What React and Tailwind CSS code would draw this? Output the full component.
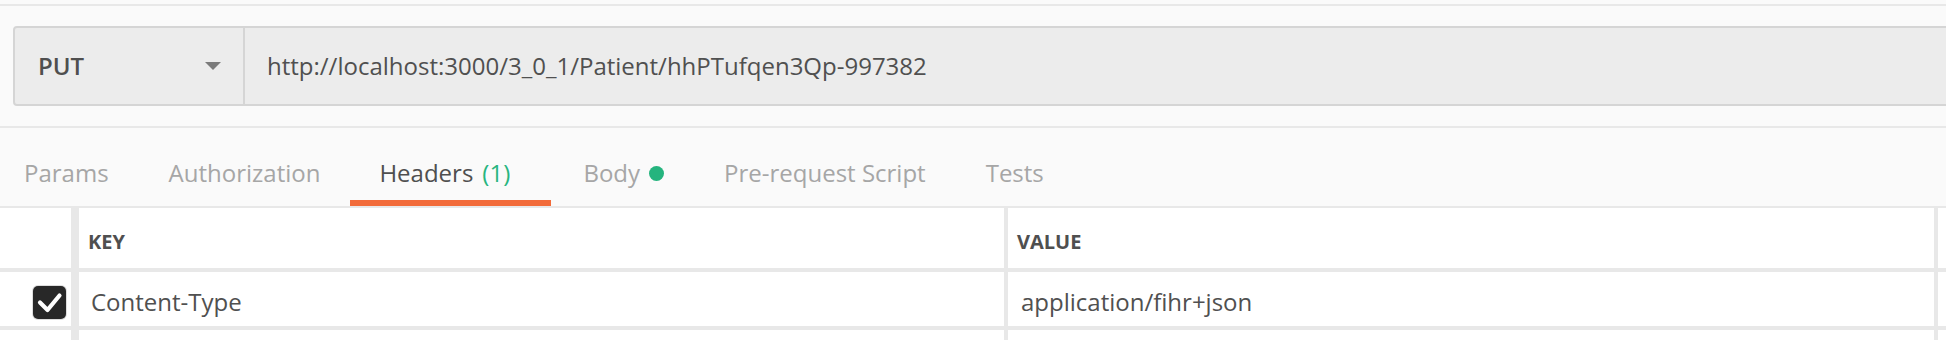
import React from 'react';

const tabs = [
  { id: 'params', label: 'Params' },
  { id: 'auth', label: 'Authorization' },
  { id: 'headers', label: 'Headers', count: 1, active: true },
  { id: 'body', label: 'Body', dot: true },
  { id: 'pre', label: 'Pre-request Script' },
  { id: 'tests', label: 'Tests' },
];

const headers = [{ key: 'Content-Type', value: 'application/fihr+json', enabled: true }];

const Checkbox = ({ checked }) => (
  <span className="flex items-center justify-center w-[33px] h-[33px] rounded-[5px] bg-[#282828] ring-1 ring-[#dedede]">
    {checked && (
      <svg width="33" height="33" viewBox="0 0 33 33" fill="none">
        <path d="M7 16.5 L14.5 24 L26.5 9.5" stroke="#fff" strokeWidth="4.2" strokeLinecap="round" strokeLinejoin="round" />
      </svg>
    )}
  </span>
);

export default function App() {
  return (
    <div className="w-[1946px] h-[340px] overflow-hidden bg-[#fafafa] font-['Open_Sans',sans-serif] text-[#505050]">
      <div className="h-[4px]" />

      {/* Request URL bar */}
      <div className="border-t-2 border-b-2 border-[#e8e8e8] pt-[20px] pb-[20px] pl-[13px] flex">
        <div className="flex flex-1 -mr-6 h-[80px] border-2 border-[#d5d5d5] rounded-[4px] bg-[#ececec]">
          <div className="w-[230px] shrink-0 flex items-center justify-between pl-[23px] pr-[22px] border-r-2 border-[#d5d5d5]">
            <span className="text-[24px] leading-[32px] font-semibold text-[#4f4f4f]">PUT</span>
            <svg width="16" height="8" viewBox="0 0 16 8">
              <path d="M0 0 H16 L8 8 Z" fill="#7b7b7b" />
            </svg>
          </div>
          <div className="flex items-center pl-[22px] text-[24px] leading-[32px] text-[#505050] whitespace-nowrap">
            http://localhost:3000/3_0_1/Patient/hhPTufqen3Qp-997382
          </div>
        </div>
      </div>

      {/* Tabs */}
      <div className="flex h-[80px] border-b-2 border-[#e8e8e8] -ml-[6px]">
        {tabs.map((t) => (
          <div
            key={t.id}
            className={`relative flex items-start pt-[29px] text-[24px] leading-[32px] whitespace-nowrap ${
              t.active ? 'w-[203px] pl-[29px] text-[#4f4f4f]' : 'px-[30px] text-[#a6a6a6]'
            }`}
          >
            <span>{t.label}</span>
            {t.count != null && <span className="ml-[9px] text-[#27b57f]">({t.count})</span>}
            {t.dot && <span className="ml-[9px] mt-[9px] w-[15px] h-[15px] rounded-full bg-[#25b47e]" />}
            {t.active && <span className="absolute left-0 right-[2px] bottom-0 h-[6px] bg-[#f26b3a]" />}
          </div>
        ))}
      </div>

      {/* Headers table */}
      <div className="bg-white">
        <div className="flex h-[64px] border-b-4 border-[#e8e8e8]">
          <div className="w-[79px] shrink-0 border-r-[8px] border-[#e8e8e8]" />
          <div className="w-[929px] shrink-0 border-r-4 border-[#e8e8e8] flex items-center pl-[9px] pt-[7px] text-[20px] leading-[28px] font-bold text-[#4f4f4f]">
            KEY
          </div>
          <div className="w-[930px] shrink-0 border-r-4 border-[#e8e8e8] flex items-center pl-[9px] pt-[7px] text-[20px] leading-[28px] font-bold text-[#4f4f4f]">
            VALUE
          </div>
          <div className="flex-1" />
        </div>
        {headers.map((h) => (
          <div key={h.key} className="flex h-[58px] border-b-4 border-[#e8e8e8]">
            <div className="w-[79px] shrink-0 border-r-[8px] border-[#e8e8e8] flex items-center justify-end pr-[5px] pt-[6px]">
              <Checkbox checked={h.enabled} />
            </div>
            <div className="w-[929px] shrink-0 border-r-4 border-[#e8e8e8] flex items-center pl-[12px] pt-[5px] text-[24px] leading-[32px] text-[#505050]">
              {h.key}
            </div>
            <div className="w-[930px] shrink-0 border-r-4 border-[#e8e8e8] flex items-center pl-[13px] pt-[5px] text-[24px] leading-[32px] text-[#505050]">
              {h.value}
            </div>
            <div className="flex-1" />
          </div>
        ))}
        <div className="flex h-[40px]">
          <div className="w-[79px] shrink-0 border-r-[8px] border-[#e8e8e8]" />
          <div className="w-[929px] shrink-0 border-r-4 border-[#e8e8e8]" />
          <div className="w-[930px] shrink-0 border-r-4 border-[#e8e8e8]" />
          <div className="flex-1" />
        </div>
      </div>
    </div>
  );
}
